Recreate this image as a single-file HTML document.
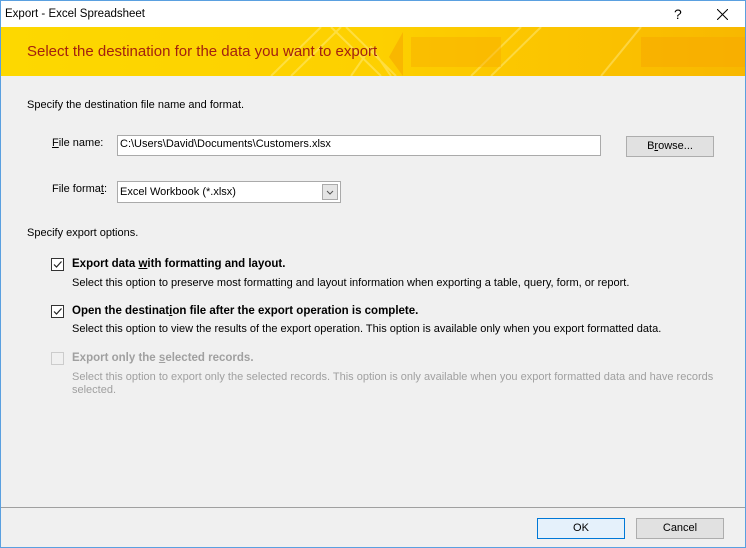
<!DOCTYPE html>
<html><head><style>
body{margin:0;width:746px;height:548px;overflow:hidden;font-family:"Liberation Sans",sans-serif;font-size:11px;color:#000;}
.win{position:absolute;left:0;top:0;width:744px;height:546px;border:1px solid #5aa0e0;background:#f0f0f0;}
.title{position:absolute;left:0;top:0;width:744px;height:26px;background:#fff;}
.title span{position:absolute;left:4px;top:7px;font-size:11.5px;}
.banner{position:absolute;left:0;top:26px;width:744px;height:49px;background:linear-gradient(90deg,#fdd800 0%,#fdd000 50%,#fbc400 75%,#f8b800 100%);overflow:hidden;}
.banner .t{position:absolute;left:26px;top:16px;font-size:15px;color:#a3210f;}
.a{position:absolute;}
.inp{position:absolute;background:#fff;border:1px solid #aaa;box-sizing:border-box;padding:2px 2px;font-size:11px;}
.btn{position:absolute;background:#e1e1e1;border:1px solid #adadad;box-sizing:border-box;text-align:center;font-size:11px;line-height:18px;}
.cb{position:absolute;width:13px;height:13px;border:1px solid #333;box-sizing:border-box;background:#fff;}
b{font-weight:bold}
</style></head><body>
<div class="win">
<div class="title"><span>Export - Excel Spreadsheet</span>
<span style="left:673px;top:5px;font-size:14px">?</span>
<svg class="a" style="left:716px;top:8px" width="11" height="11"><path d="M0 0L11 11M11 0L0 11" stroke="#000" stroke-width="1"/></svg></div>
<div class="banner">
<svg class="a" style="left:0;top:0" width="744" height="49">
<g stroke="#fff3a0" stroke-width="2" fill="none" opacity=".4">
<path d="M270 49L320 0M290 49L340 0M330 0L380 49M345 0L395 49M350 49L370 20L390 49M470 49L520 0M490 49L540 0M600 49L640 0"/>
</g>
<path d="M388 30L402 5L402 49Z" fill="#f59f00" opacity=".5"/>
<rect x="410" y="10" width="90" height="30" fill="#f8a800" opacity=".4"/>
<rect x="640" y="10" width="104" height="30" fill="#f7a500" opacity=".5"/>
</svg>
<div class="t">Select the destination for the data you want to export</div></div>
<div class="a" style="left:26px;top:98px">Specify the destination file name and format.</div>
<div class="a" style="left:51px;top:136px"><u>F</u>ile name:</div>
<div class="inp" style="left:116px;top:134px;width:484px;height:21px">C:\Users\David\Documents\Customers.xlsx</div>
<div class="btn" style="left:625px;top:135px;width:88px;height:21px">B<u>r</u>owse...</div>
<div class="a" style="left:51px;top:182px">File forma<u>t</u>:</div>
<div class="inp" style="left:116px;top:180px;width:224px;height:22px;padding-top:4px">Excel Workbook (*.xlsx)
<div style="position:absolute;right:2px;top:2px;width:16px;height:16px;background:#e5e5e5;border:1px solid #aaa;box-sizing:border-box"><svg width="14" height="14"><path d="M4 6L7 9L10 6" stroke="#555" fill="none"/></svg></div></div>
<div class="a" style="left:26px;top:226px">Specify export options.</div>
<div class="cb" style="left:50px;top:257px"><svg width="11" height="11"><path d="M2 5.5L4.5 8L9.5 2.5" stroke="#222" fill="none" stroke-width="1.2"/></svg></div>
<div class="a" style="left:71px;top:257px;font-size:11.5px"><b>Export data <u>w</u>ith formatting and layout.</b></div>
<div class="a" style="left:71px;top:276px">Select this option to preserve most formatting and layout information when exporting a table, query, form, or report.</div>
<div class="cb" style="left:50px;top:304px"><svg width="11" height="11"><path d="M2 5.5L4.5 8L9.5 2.5" stroke="#222" fill="none" stroke-width="1.2"/></svg></div>
<div class="a" style="left:71px;top:304px;font-size:11.5px"><b>Open the destinat<u>i</u>on file after the export operation is complete.</b></div>
<div class="a" style="left:71px;top:322px">Select this option to view the results of the export operation. This option is available only when you export formatted data.</div>
<div class="cb" style="left:50px;top:351px;border-color:#ccc;background:#f0f0f0"></div>
<div class="a" style="left:71px;top:351px;font-size:11.5px;color:#a0a0a0"><b>Export only the <u>s</u>elected records.</b></div>
<div class="a" style="left:71px;top:370px;color:#a0a0a0;width:660px;line-height:13px">Select this option to export only the selected records. This option is only available when you export formatted data and have records selected.</div>
<div class="a" style="left:0;top:506px;width:744px;height:1px;background:#a0a0a0"></div>
<div class="btn" style="left:536px;top:517px;width:88px;height:21px;background:#e5f1fb;border-color:#0078d7">OK</div>
<div class="btn" style="left:635px;top:517px;width:88px;height:21px">Cancel</div>
</div>
</body></html>
